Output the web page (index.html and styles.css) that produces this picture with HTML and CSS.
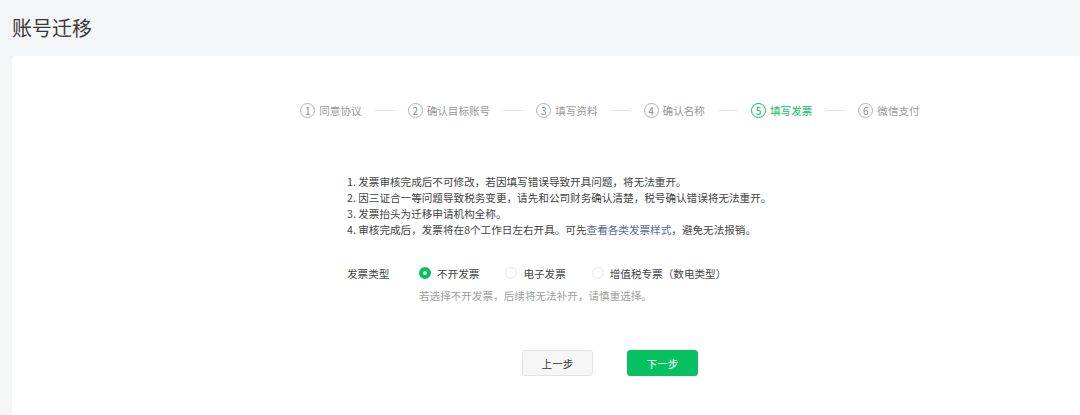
FILE: index.html
```html
<!DOCTYPE html>
<html>
<head>
    <title>账号迁移</title>
    <link rel="stylesheet" href="styles.css">
</head>
<body>

    <h2 class="page-title">账号迁移</h2>

    <div class="card">
        <div class="steps">
            <div class="step"><span class="num">1</span>同意协议</div>
            <span class="line"></span>
            <div class="step"><span class="num">2</span>确认目标账号</div>
            <span class="line"></span>
            <div class="step"><span class="num">3</span>填写资料</div>
            <span class="line"></span>
            <div class="step"><span class="num">4</span>确认名称</div>
            <span class="line"></span>
            <div class="step active"><span class="num">5</span>填写发票</div>
            <span class="line"></span>
            <div class="step"><span class="num">6</span>微信支付</div>
        </div>

        <div class="content">
            <ol class="notes">
                <li>1. 发票审核完成后不可修改，若因填写错误导致开具问题，将无法重开。</li>
                <li>2. 因三证合一等问题导致税务变更，请先和公司财务确认清楚，税号确认错误将无法重开。</li>
                <li>3. 发票抬头为迁移申请机构全称。</li>
                <li>4. 审核完成后，发票将在8个工作日左右开具。可先<a href="#" class="link">查看各类发票样式</a>，避免无法报销。</li>
            </ol>

            <div class="form-row">
                <span class="label">发票类型</span>
                <div class="options">
                    <label class="radio checked"><span class="dot"></span>不开发票</label>
                    <label class="radio"><span class="dot"></span>电子发票</label>
                    <label class="radio"><span class="dot"></span>增值税专票（数电类型）</label>
                </div>
            </div>
            <p class="hint">若选择不开发票，后续将无法补开，请慎重选择。</p>
        </div>

        <div class="actions">
            <button class="btn">上一步</button>
            <button class="btn primary">下一步</button>
        </div>
    </div>

</body>
</html>
```

FILE: styles.css
```css
body {
    margin: 0;
    padding: 0 0 0 12px;
    background-color: #f4f5f7;
    font-family: "Noto Sans CJK SC", "Noto Sans", sans-serif;
    color: #444;
}

.page-title {
    margin: 0;
    height: 56px;
    line-height: 56px;
    font-size: 20px;
    font-weight: normal;
    color: #3a3a3a;
}

.card {
    background-color: #fff;
    height: 359px;
    border-radius: 4px 0 0 0;
    padding: 47px 0 0 128px;
    box-sizing: border-box;
}

.steps {
    display: flex;
    justify-content: center;
    align-items: center;
    font-size: 10.6px;
    color: #999;
    height: 14px;
}

.step {
    display: flex;
    align-items: center;
    gap: 4px;
}

.num {
    width: 13px;
    height: 13px;
    border: 1px solid #b0b0b0;
    border-radius: 50%;
    font-size: 10px;
    line-height: 13px;
    text-align: center;
    color: #888;
}

.step.active {
    color: #07c160;
}

.step.active .num {
    border-color: #07c160;
    color: #07c160;
}

.line {
    width: 20px;
    height: 1px;
    background-color: #e4e4e4;
    margin: 0 13px;
}

.content {
    width: 526px;
    margin: 57px auto 0;
    font-size: 10.6px;
}

.notes {
    list-style: none;
    margin: 0;
    padding: 0;
    line-height: 16px;
    color: #444;
}

.link {
    color: #576b95;
    text-decoration: none;
}

.form-row {
    display: flex;
    align-items: center;
    margin-top: 25px;
    height: 20px;
}

.label {
    width: 72px;
}

.options {
    display: flex;
    gap: 26px;
}

.radio {
    display: flex;
    align-items: center;
    gap: 6px;
}

.dot {
    width: 12px;
    height: 12px;
    border: 1px solid #e6e6e6;
    border-radius: 50%;
    box-sizing: border-box;
}

.radio.checked .dot {
    border: 4px solid #07c160;
}

.hint {
    margin: 5px 0 0 72px;
    line-height: 16px;
    color: #a0a0a0;
}

.actions {
    display: flex;
    justify-content: center;
    gap: 34px;
    margin-top: 46px;
}

.btn {
    width: 71px;
    height: 26px;
    font-family: inherit;
    font-size: 10.6px;
    border: 1px solid #e4e4e4;
    background-color: #f6f6f6;
    color: #333;
    border-radius: 3px;
    cursor: pointer;
}

.btn.primary {
    background-color: #07c160;
    border-color: #07c160;
    color: #fff;
}
```
